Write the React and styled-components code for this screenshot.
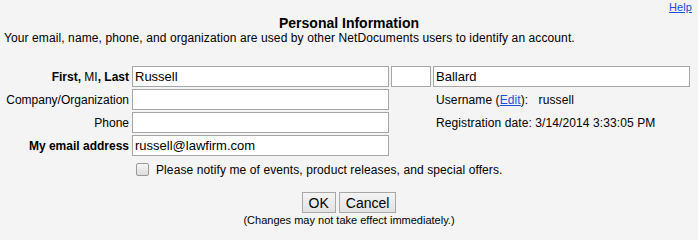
import styled, { createGlobalStyle } from "styled-components";

const GlobalStyle = createGlobalStyle`
  body {
    margin: 0;
    background: #f4f4f4;
    font-family: "Liberation Sans", Arial, sans-serif;
    color: #000;
  }
`;

const Page = styled.div`
  width: 698px;
  height: 240px;
  padding: 0 4px;
  box-sizing: border-box;
  font-size: 12px;
  letter-spacing: 0.1px;
`;

const HelpBar = styled.div`
  display: flex;
  justify-content: flex-end;
  height: 14px;
  padding-top: 1px;
  padding-right: 2px;
  font-size: 11px;
`;

const LinkText = styled.a`
  color: #1a4fd6;
  text-decoration: underline;
  cursor: pointer;
`;

const Title = styled.h1`
  margin: 0;
  font-size: 14px;
  font-weight: bold;
  text-align: center;
  line-height: 16px;
  letter-spacing: 0;
`;

const Intro = styled.p`
  margin: 0;
  line-height: 15px;
`;

const FormGrid = styled.div`
  display: grid;
  grid-template-columns: 126px 257px 40px 257px;
  grid-auto-rows: 21px;
  column-gap: 2px;
  row-gap: 2px;
  margin-top: 20px;
  align-items: center;
`;

const Label = styled.div`
  text-align: right;
  white-space: nowrap;
  font-weight: ${(p) => (p.$bold ? "bold" : "normal")};
  padding-right: 1px;
  letter-spacing: 0;
`;

const Light = styled.span`
  font-weight: normal;
`;

const Field = styled.input`
  box-sizing: border-box;
  width: 100%;
  height: 21px;
  margin: 0;
  border: 1px solid #a6a6a6;
  background: #fff;
  padding: 1px 2px;
  font-family: "Liberation Sans", Arial, sans-serif;
  font-size: 13px;
  color: #000;
  outline: none;
`;

const Info = styled.div`
  padding-left: 3px;
  white-space: nowrap;
`;

const Spacer = styled.div``;

const CheckRow = styled.label`
  grid-column: 2 / 5;
  display: flex;
  align-items: center;
  gap: 7px;
  padding-left: 4px;
  margin-top: 2px;
`;

const Box = styled.span`
  width: 11px;
  height: 11px;
  border: 1px solid #9a9a9a;
  border-radius: 2px;
  background: linear-gradient(#f6f6f6, #dcdcdc);
`;

const Actions = styled.div`
  display: flex;
  justify-content: center;
  gap: 3px;
  margin-top: 13px;
`;

const Button = styled.button`
  height: 21px;
  padding: 0 6px;
  font-family: "Liberation Sans", Arial, sans-serif;
  font-size: 14px;
  color: #000;
  background: linear-gradient(#f4f4f4, #e2e2e2);
  border: 1px solid #a8a8a8;
  border-radius: 0;
`;

const Note = styled.div`
  text-align: center;
  font-size: 11px;
  margin-top: 1px;
  letter-spacing: 0;
`;

export default function App() {
  return (
    <>
      <GlobalStyle />
      <Page>
        <HelpBar>
          <LinkText>Help</LinkText>
        </HelpBar>
        <Title>Personal Information</Title>
        <Intro>
          Your email, name, phone, and organization are used by other NetDocuments users to identify an account.
        </Intro>
        <FormGrid>
          <Label $bold>
            First, <Light>MI</Light>, Last
          </Label>
          <Field defaultValue="Russell" />
          <Field />
          <Field defaultValue="Ballard" />

          <Label>Company/Organization</Label>
          <Field />
          <Spacer />
          <Info>
            Username (<LinkText>Edit</LinkText>):&nbsp;&nbsp; russell
          </Info>

          <Label>Phone</Label>
          <Field />
          <Spacer />
          <Info>Registration date: 3/14/2014 3:33:05 PM</Info>

          <Label $bold>My email address</Label>
          <Field defaultValue="russell@lawfirm.com" />
          <Spacer />
          <Spacer />

          <CheckRow>
            <Box />
            Please notify me of events, product releases, and special offers.
          </CheckRow>
        </FormGrid>
        <Actions>
          <Button>OK</Button>
          <Button>Cancel</Button>
        </Actions>
        <Note>(Changes may not take effect immediately.)</Note>
      </Page>
    </>
  );
}
